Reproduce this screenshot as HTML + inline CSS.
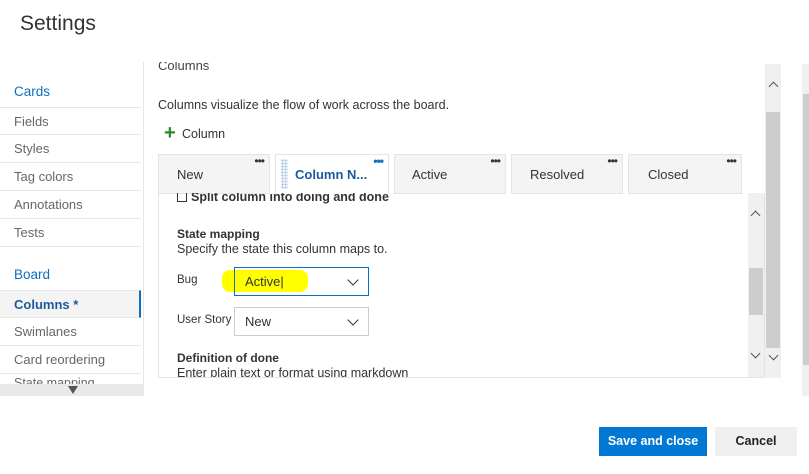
<!DOCTYPE html>
<html><head><style>
*{box-sizing:border-box;margin:0;padding:0}
body{width:809px;height:474px;background:#fff;font-family:"Liberation Sans",sans-serif;position:relative;overflow:hidden;color:#333}
.a{position:absolute}
.ni{position:absolute;left:0;width:141px;height:28px;border-bottom:1px solid #e6e6e6;padding-left:14px;line-height:27px;font-size:13px;color:#666}
.tab{position:absolute;top:154px;height:40px;background:#f4f4f4;border:1px solid #e4e4e4;font-size:13px;line-height:40px;color:#333}
.dots{position:absolute;right:5px;top:-14px;font-size:12px;letter-spacing:-1px;color:#333}
.sel{position:absolute;width:135px;height:29px;border:1px solid #ccc;font-size:13px;line-height:28px;padding-left:10px}
.chev{position:absolute;right:11px;top:8px;width:8px;height:8px;border-right:1.3px solid #333;border-bottom:1.3px solid #333;transform:rotate(45deg)}
.up,.dn{position:absolute;width:7px;height:7px;border-left:1.6px solid #555;border-top:1.6px solid #555}
.up{transform:rotate(45deg)}
.dn{transform:rotate(225deg)}
</style></head><body>
<div class="a" style="left:20px;top:12px;font-size:21px;color:#333">Settings</div>

<div class="a" style="left:143px;top:62px;width:1px;height:334px;background:#e6e6e6"></div>
<div class="a" style="top:84px;font-size:13.5px;color:#106ebe;left:14px">Cards</div>
<div class="ni" style="top:107px;border-top:1px solid #e6e6e6">Fields</div>
<div class="ni" style="top:135px">Styles</div>
<div class="ni" style="top:163px">Tag colors</div>
<div class="ni" style="top:191px">Annotations</div>
<div class="ni" style="top:219px">Tests</div>
<div class="a" style="top:267px;left:14px;font-size:13.5px;color:#106ebe">Board</div>
<div class="ni" style="top:290px;border-top:1px solid #e6e6e6;background:#f4f4f4;color:#1a5a9c;font-weight:bold;border-right:2px solid #106ebe">Columns *</div>
<div class="ni" style="top:318px">Swimlanes</div>
<div class="ni" style="top:346px">Card reordering</div>
<div class="a" style="left:0;top:374px;width:141px;height:12px;overflow:hidden"><div style="padding-left:14px;font-size:12.5px;color:#666;margin-top:2px">State mapping</div></div>
<div class="a" style="left:0;top:384px;width:144px;height:12px;background:#e8e8e8"></div>
<div class="a" style="left:68px;top:386px;width:0;height:0;border-left:5px solid transparent;border-right:5px solid transparent;border-top:8px solid #555"></div>

<div class="a" style="left:158px;top:62px;font-size:13px;color:#444;height:11px;overflow:hidden"><div style="margin-top:-4px">Columns</div></div>
<div class="a" style="left:158px;top:98px;font-size:12.5px;color:#333">Columns visualize the flow of work across the board.</div>
<div class="a" style="left:164px;top:123px;font-size:20px;color:#2a8a2a;font-weight:bold;line-height:20px">+</div>
<div class="a" style="left:182px;top:127px;font-size:12.5px;color:#333">Column</div>

<div class="tab" style="left:158px;width:112px;padding-left:18px">New<span class="dots">•••</span></div>
<div class="tab" style="left:275px;width:114px;padding-left:19px;background:#fff;border-bottom:none;color:#1a5a9c;font-weight:bold;height:40px">Column N...<span class="dots" style="color:#106ebe">•••</span>
<div style="position:absolute;left:5px;top:4px;width:7px;height:30px;background-image:radial-gradient(#9bbde0 1px,transparent 1.2px);background-size:3px 3px"></div></div>
<div class="tab" style="left:394px;width:112px;padding-left:17px">Active<span class="dots">•••</span></div>
<div class="tab" style="left:511px;width:112px;padding-left:18px">Resolved<span class="dots">•••</span></div>
<div class="tab" style="left:628px;width:114px;padding-left:19px">Closed<span class="dots">•••</span></div>

<div class="a" style="left:158px;top:193px;width:607px;height:185px;border:1px solid #e4e4e4;border-top:none;overflow:hidden">
<div style="position:absolute;left:18px;top:-3px;font-size:12.5px;font-weight:bold;color:#333"><span style="display:inline-block;width:10px;height:10px;border:1px solid #333;margin-right:4px;vertical-align:-1px"></span>Split column into doing and done</div>
<div style="position:absolute;left:18px;top:34px;font-size:12px;font-weight:bold;color:#333">State mapping</div>
<div style="position:absolute;left:18px;top:49px;font-size:12.5px;color:#333">Specify the state this column maps to.</div>
<div style="position:absolute;left:18px;top:81px;font-size:11.5px;color:#333">Bug</div>
<div style="position:absolute;left:18px;top:121px;font-size:11.5px;color:#333">User Story</div>
<div style="position:absolute;left:18px;top:158px;font-size:12px;font-weight:bold;color:#333">Definition of done</div>
<div style="position:absolute;left:18px;top:173px;font-size:12.5px;color:#333">Enter plain text or format using markdown</div>
<div style="position:absolute;right:0;top:0;width:16px;height:185px;background:#f0f0f0"></div>
<div style="position:absolute;right:1px;top:75px;width:14px;height:47px;background:#cdcdcd"></div>
<div class="up" style="right:5px;top:19px"></div>
<div class="dn" style="right:5px;top:157px"></div>
</div>
<div class="a" style="left:222px;top:270px;width:86px;height:22px;background:#ffff00;border-radius:8px"></div>
<div class="sel" style="left:234px;top:267px;border-color:#106ebe;background:transparent">Active|<div class="chev"></div></div>
<div class="sel" style="left:234px;top:307px">New<div class="chev"></div></div>

<div class="a" style="left:765px;top:64px;width:16px;height:314px;background:#f0f0f0"></div>
<div class="a" style="left:766px;top:112px;width:14px;height:236px;background:#cdcdcd"></div>
<div class="up" style="left:770px;top:83px"></div>
<div class="dn" style="left:770px;top:352px"></div>
<div class="a" style="left:802px;top:64px;width:7px;height:332px;background:#f0f0f0"></div>
<div class="a" style="left:803px;top:94px;width:6px;height:271px;background:#cdcdcd"></div>

<div class="a" style="left:599px;top:427px;width:108px;height:29px;background:#0078d4;color:#fff;font-size:12.5px;font-weight:bold;line-height:29px;text-align:center">Save and close</div>
<div class="a" style="left:715px;top:427px;width:82px;height:29px;background:#f0f0f0;color:#222;font-size:12.5px;font-weight:bold;line-height:29px;text-align:center">Cancel</div>
</body></html>
